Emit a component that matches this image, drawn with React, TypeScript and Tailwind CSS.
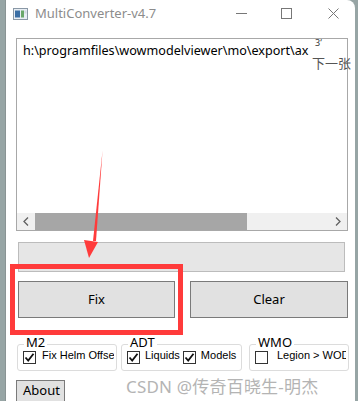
import React from "react";

const Check = ({ on }: { on: boolean }) => (
  <span className="w-[13px] h-[13px] border border-[#333] bg-white flex items-center justify-center shrink-0">
    {on && (
      <svg width="11" height="11" viewBox="0 0 11 11">
        <path d="M1.5 5.5 L4.2 8.5 L9.5 1.8" stroke="#111" strokeWidth="1.8" fill="none" />
      </svg>
    )}
  </span>
);

const Group = ({ title, className, children }: { title: string; className: string; children: React.ReactNode }) => (
  <div className={`relative border border-[#dcdcdc] rounded-[3px] h-[27px] flex items-center pl-[5px] pr-[2px] gap-[3px] ${className}`}>
    <span className="absolute -top-[10px] left-[6px] bg-white px-[2px] text-[13px] leading-[14px] text-black" style={{ fontFamily: '"Noto Sans", sans-serif' }}>
      {title}
    </span>
    {children}
  </div>
);

export default function App() {
  return (
    <div className="relative w-[358px] h-[401px] overflow-hidden flex bg-[#97a5a5]" style={{ fontFamily: '"Noto Sans", "Noto Sans CJK SC", sans-serif' }}>
      <div className="w-[5px] shrink-0" />
      <div className="w-[350px] shrink-0 bg-white border-l border-[#8a9494] rounded-tr-[8px] flex flex-col [&>*]:shrink-0">
        {/* title bar */}
        <div className="h-[30px] flex items-center">
          <svg width="15" height="12" viewBox="0 0 15 12" className="ml-[7px] mt-[-3px]">
            <rect x="0.5" y="0.5" width="14" height="11" fill="#e8eef4" stroke="#8a98a6" />
            <rect x="2" y="2.5" width="5" height="7" fill="#3a6ea5" />
            <rect x="8" y="2.5" width="3" height="7" fill="#6aa86a" />
            <rect x="11.5" y="2.5" width="2" height="3" fill="#d0d8e0" />
          </svg>
          <span className="ml-[7px] mt-[-3px] text-[13px] text-[#8c8c8c]">MultiConverter-v4.7</span>
          <div className="ml-auto flex items-center mt-[-3px]">
            <span className="w-[11px] h-px bg-[#777] mr-[34px]" />
            <span className="w-[11px] h-[11px] border border-[#777] mr-[36px]" />
            <svg width="11" height="11" viewBox="0 0 11 11" className="mr-[16px]">
              <path d="M0.5 0.5 L10.5 10.5 M10.5 0.5 L0.5 10.5" stroke="#777" strokeWidth="1" />
            </svg>
          </div>
        </div>

        {/* text box */}
        <div className="mt-[8px] ml-[10px] w-[332px] h-[193px] border border-[#a8a8a8] flex flex-col">
          <div className="flex-1 pl-[6px] pt-[4px] text-[12.6px] leading-[16px] text-black whitespace-nowrap overflow-hidden">
            h:\programfiles\wowmodelviewer\mo\export\ax
          </div>
          <div className="h-[17px] bg-[#f0f0f0] flex items-center">
            <span className="w-[18px] flex justify-center">
              <svg width="6" height="9" viewBox="0 0 6 9"><path d="M5 0.5 L1 4.5 L5 8.5" stroke="#606060" strokeWidth="1.3" fill="none" /></svg>
            </span>
            <span className="w-[212px] h-[17px] bg-[#a6a6a6]" />
            <span className="ml-auto w-[18px] flex justify-center">
              <svg width="6" height="9" viewBox="0 0 6 9"><path d="M1 0.5 L5 4.5 L1 8.5" stroke="#606060" strokeWidth="1.3" fill="none" /></svg>
            </span>
          </div>
        </div>

        {/* progress bar */}
        <div className="mt-[11px] ml-[12px] w-[327px] h-[30px] bg-[#e6e6e6] border border-[#bcbcbc]" />

        {/* buttons */}
        <div className="mt-[9px] ml-[12px] flex gap-[15px]">
          <button className="w-[157px] h-[37px] bg-[#e1e1e1] border border-[#7a7a7a] text-[13px] text-black">Fix</button>
          <button className="w-[158px] h-[37px] bg-[#e1e1e1] border border-[#7a7a7a] text-[13px] text-black">Clear</button>
        </div>

        {/* groups */}
        <div
          className="mt-[26px] ml-[11px] flex gap-[5px] text-[11px] text-black"
          style={{ fontFamily: '"Liberation Sans", sans-serif' }}
        >
          <Group title="M2" className="w-[100px]">
            <Check on />
            <span className="ml-[3px] mt-[-4px] whitespace-nowrap overflow-hidden">Fix Helm Offse</span>
          </Group>
          <Group title="ADT" className="w-[121px] ml-[-1px]">
            <Check on />
            <span className="ml-[2px] mt-[-4px]">Liquids</span>
            <Check on />
            <span className="mt-[-4px] ml-[2px]">Models</span>
          </Group>
          <Group title="WMO" className="w-[100px] ml-[2px]">
            <Check on={false} />
            <span className="ml-[6px] mt-[-4px] whitespace-nowrap overflow-hidden">Legion &gt; WOD</span>
          </Group>
        </div>

        {/* about */}
        <button className="mt-[9px] ml-[10px] w-[49px] h-[26px] bg-[#e1e1e1] border border-[#7a7a7a] text-[13px] text-black text-left pl-[6px] pb-[4px]">
          About
        </button>
      </div>

      {/* overlay: tooltip fragment */}
      <span className="absolute left-[315px] top-[38px] text-[9px] leading-[10px] text-[#333]">3‘</span>
      <span className="absolute left-[312px] top-[56px] text-[13px] leading-[15px] text-[#555] whitespace-nowrap">下一张</span>

      {/* overlay: red annotation */}
      <div className="absolute left-[10px] top-[264px] w-[173px] h-[71px] border-[5px] border-[#ff3b3b]" />
      <svg className="absolute left-0 top-0" width="358" height="401" viewBox="0 0 358 401">
        <path d="M102.5 151 L96 241 L93 241 Z" fill="#ff3b3b" />
        <path d="M84 240 L98 242 L89 258 Z" fill="#ff3b3b" />
      </svg>

      {/* overlay: watermark */}
      <span className="absolute left-[126px] top-[377px] text-[17px] leading-[20px] text-[#b4b4b4] tracking-[0.2px]">CSDN @传奇百晓生-明杰</span>
    </div>
  );
}
